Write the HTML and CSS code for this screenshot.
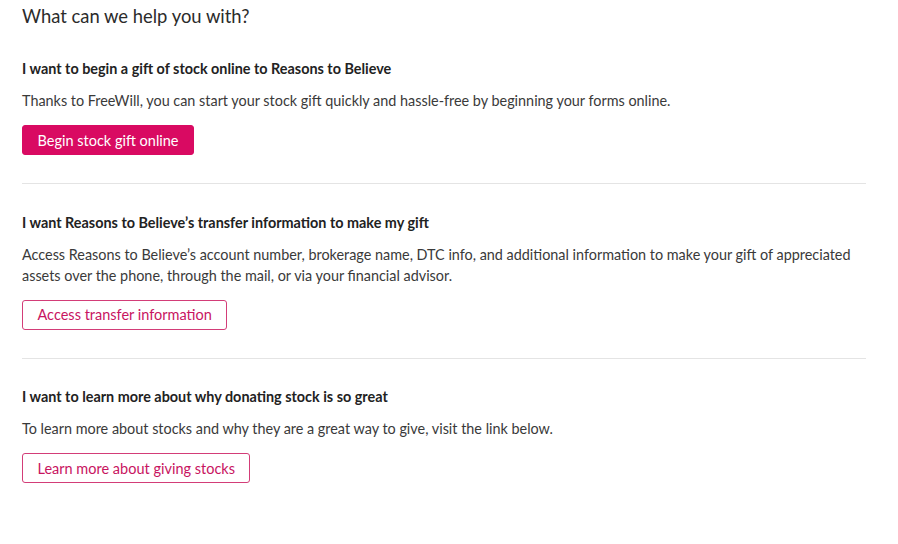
FILE: index.html
```html
<!DOCTYPE html>
<html>
<head>
<meta charset="utf-8">
<link rel="stylesheet" href="styles.css">
</head>
<body>
<div class="page">
  <h1 class="title">What can we help you with?</h1>
  <section class="option">
    <h2 class="option-heading">I want to begin a gift of stock online to Reasons to Believe</h2>
    <p class="option-text">Thanks to FreeWill, you can start your stock gift quickly and hassle-free by beginning your forms online.</p>
    <a class="btn btn-primary">Begin stock gift online</a>
  </section>
  <hr class="divider">
  <section class="option">
    <h2 class="option-heading">I want Reasons to Believe’s transfer information to make my gift</h2>
    <p class="option-text">Access Reasons to Believe’s account number, brokerage name, DTC info, and additional information to make your gift of appreciated assets over the phone, through the mail, or via your financial advisor.</p>
    <a class="btn btn-outline">Access transfer information</a>
  </section>
  <hr class="divider">
  <section class="option">
    <h2 class="option-heading">I want to learn more about why donating stock is so great</h2>
    <p class="option-text">To learn more about stocks and why they are a great way to give, visit the link below.</p>
    <a class="btn btn-outline">Learn more about giving stocks</a>
  </section>
</div>
</body>
</html>
```
FILE: styles.css
```css
* { box-sizing: border-box; }
html, body { margin: 0; padding: 0; background: #fff; }
body {
  font-family: "Lato", "Noto Sans", sans-serif;
  color: #333;
}
.page {
  width: 844px;
  margin-left: 22px;
  padding-top: 4px;
}
.title {
  margin: 0;
  font-size: 18.4px;
  font-weight: 400;
  line-height: 24px;
  color: #2b2b2b;
}
.option {
  display: flex;
  flex-direction: column;
  align-items: flex-start;
}
.title + .option { margin-top: 30px; }
.option-heading {
  margin: 0;
  font-size: 14.4px;
  font-weight: 700;
  line-height: 22px;
  color: #222;
}
.option-text {
  margin: 10px 0 0;
  font-size: 14.4px;
  line-height: 21px;
  color: #3a3a3a;
}
.btn {
  margin-top: 14px;
  display: inline-flex;
  align-items: center;
  height: 30px;
  padding: 0 14.5px;
  border-radius: 3px;
  font-size: 14.5px;
  cursor: pointer;
}
.btn-primary {
  background: #d90a62;
  color: #fff;
  border: 1px solid #d90a62;
}
.btn-outline {
  background: #fff;
  color: #c8145f;
  border: 1px solid #d33d78;
}
.divider {
  border: 0;
  border-top: 1px solid #e4e4e4;
  margin: 28px 0 27.5px;
}
```
